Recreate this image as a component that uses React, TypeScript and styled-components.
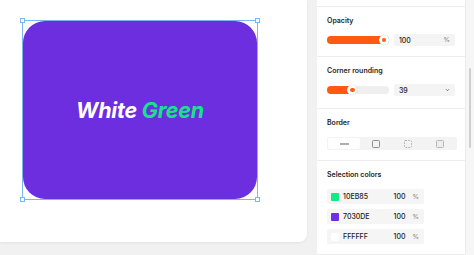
import React from 'react';
import styled, { createGlobalStyle } from 'styled-components';

const GlobalStyle = createGlobalStyle`
  html, body {
    margin: 0;
    padding: 0;
    background: #f1f1f1;
    font-family: Inter, "Liberation Sans", sans-serif;
  }
`;

const Page = styled.div`
  width: 474px;
  height: 255px;
  display: flex;
  align-items: flex-start;
  overflow: hidden;
  background: #f1f1f1;
`;

const CanvasArea = styled.div`
  width: 307px;
  height: 242px;
  flex-shrink: 0;
  background: #fff;
  border-bottom-right-radius: 8px;
  box-shadow: 0 1px 3px rgba(0, 0, 0, 0.06);
  padding: 20px 0 0 22px;
  box-sizing: border-box;
`;

const Selection = styled.div`
  position: relative;
  width: 236px;
  height: 180px;
  box-sizing: border-box;
  border: 1px solid #7cb5f2;
`;

const Frame = styled.div`
  width: 100%;
  height: 100%;
  background: #6c2edf;
  border-radius: 22px;
  display: flex;
  align-items: center;
  justify-content: center;
  font-size: 21.5px;
  font-weight: 700;
  font-style: italic;
  letter-spacing: -0.2px;
  color: #fff;
`;

const Green = styled.span`
  color: #18e38b;
`;

const Handle = styled.div<{ $x: 'left' | 'right'; $y: 'top' | 'bottom' }>`
  position: absolute;
  width: 5px;
  height: 5px;
  box-sizing: border-box;
  background: #fff;
  border: 1px solid #7cb5f2;
  ${p => p.$x}: -3px;
  ${p => p.$y}: -3px;
`;

const Panel = styled.div`
  width: 148px;
  height: 255px;
  margin-left: 10px;
  flex-shrink: 0;
  background: #fff;
  border-right: 1px solid #ececec;
`;

const Scrollbar = styled.div`
  flex: 1;
  height: 255px;
  background: #f6f6f6;
  padding-top: 68px;
  display: flex;
  justify-content: center;
`;

const Thumb = styled.div`
  width: 2px;
  height: 80px;
  border-radius: 1px;
  background: #cfcfcf;
`;

const TopStub = styled.div`
  height: 6px;
  border-bottom: 1px solid #ededed;
`;

const Section = styled.div<{ $gap?: number; $bottom?: number }>`
  padding: 10px 10px ${p => p.$bottom ?? 10}px;
  border-bottom: 1px solid #ededed;
  display: flex;
  flex-direction: column;
  gap: ${p => p.$gap ?? 9}px;
`;

const Label = styled.div`
  font-size: 7px;
  line-height: 8px;
  font-weight: 600;
  color: #1e1e1e;
`;

const ControlRow = styled.div`
  display: flex;
  align-items: center;
  gap: 5px;
  height: 12px;
`;

const Track = styled.div`
  position: relative;
  width: 63px;
  height: 8px;
  border-radius: 4px;
  background: #efefef;
`;

const Fill = styled.div`
  height: 100%;
  border-radius: 4px;
  background: #ff5a12;
`;

const Knob = styled.div`
  position: absolute;
  top: 50%;
  width: 10px;
  height: 10px;
  margin: -5px 0 0 -5px;
  border-radius: 50%;
  background: #fff;
  box-shadow: 0 0 1px rgba(0, 0, 0, 0.3);
  display: flex;
  align-items: center;
  justify-content: center;

  &::after {
    content: '';
    width: 4.5px;
    height: 4.5px;
    border-radius: 50%;
    background: #ff5a12;
  }
`;

const Input = styled.div`
  width: 62px;
  height: 12px;
  box-sizing: border-box;
  padding: 0 5px;
  border-radius: 2px;
  background: #f4f4f4;
  display: flex;
  align-items: center;
  justify-content: space-between;
  font-size: 7px;
  font-weight: 500;
  color: #222;
`;

const Unit = styled.span`
  color: #8a8a8a;
  font-size: 6.5px;
`;

const Segmented = styled.div`
  width: 130px;
  height: 13px;
  display: grid;
  grid-template-columns: repeat(4, 1fr);
  background: #f3f3f3;
  border-radius: 2px;
  padding: 1px;
  box-sizing: border-box;
`;

const Segment = styled.div<{ $active?: boolean }>`
  display: flex;
  align-items: center;
  justify-content: center;
  border-radius: 2px;
  background: ${p => (p.$active ? '#fff' : 'transparent')};
`;

const Colors = styled.div`
  display: flex;
  flex-direction: column;
  gap: 5px;
`;

const ColorRow = styled.div`
  width: 97px;
  height: 15px;
  box-sizing: border-box;
  padding: 0 5px 0 4px;
  background: #f5f5f5;
  border-radius: 2px;
  display: flex;
  align-items: center;
  font-size: 7px;
  font-weight: 500;
  color: #222;
`;

const Swatch = styled.div<{ $color: string }>`
  width: 8px;
  height: 8px;
  border-radius: 1px;
  background: ${p => p.$color};
  margin-right: 4px;
`;

const Hex = styled.span`
  flex: 1;
`;

const Pct = styled.span`
  margin-right: 7px;
`;

const Slider = ({ value }: { value: number }) => (
  <Track>
    <Fill style={{ width: `${value}%` }} />
    <Knob style={{ left: `${value}%` }} />
  </Track>
);

const Chevron = () => (
  <svg width="5" height="4" viewBox="0 0 5 4">
    <path d="M1 1.2 L2.5 2.7 L4 1.2" fill="none" stroke="#555" strokeWidth="0.8" />
  </svg>
);

const colors = [
  { hex: '10EB85', color: '#10eb85' },
  { hex: '7030DE', color: '#7030de' },
  { hex: 'FFFFFF', color: '#ffffff' },
];

export default function App() {
  return (
    <>
      <GlobalStyle />
      <Page>
        <CanvasArea>
          <Selection>
            <Frame>
              White&nbsp;<Green>Green</Green>
            </Frame>
            <Handle $x="left" $y="top" />
            <Handle $x="right" $y="top" />
            <Handle $x="left" $y="bottom" />
            <Handle $x="right" $y="bottom" />
          </Selection>
        </CanvasArea>
        <Panel>
          <TopStub />
          <Section>
            <Label>Opacity</Label>
            <ControlRow>
              <Slider value={92} />
              <Input>
                <span>100</span>
                <Unit>%</Unit>
              </Input>
            </ControlRow>
          </Section>
          <Section $bottom={12}>
            <Label>Corner rounding</Label>
            <ControlRow>
              <Slider value={41} />
              <Input>
                <span>39</span>
                <Chevron />
              </Input>
            </ControlRow>
          </Section>
          <Section $gap={10}>
            <Label>Border</Label>
            <Segmented>
              <Segment $active>
                <svg width="9" height="2" viewBox="0 0 9 2">
                  <line x1="0" y1="1" x2="9" y2="1" stroke="#333" strokeWidth="0.8" />
                </svg>
              </Segment>
              <Segment>
                <svg width="8" height="8" viewBox="0 0 8 8">
                  <rect x="0.5" y="0.5" width="7" height="7" rx="1" fill="none" stroke="#777" strokeWidth="0.8" />
                </svg>
              </Segment>
              <Segment>
                <svg width="8" height="8" viewBox="0 0 8 8">
                  <rect x="0.5" y="0.5" width="7" height="7" rx="1" fill="none" stroke="#999" strokeWidth="0.8" strokeDasharray="1.5 1.2" />
                </svg>
              </Segment>
              <Segment>
                <svg width="8" height="8" viewBox="0 0 8 8">
                  <rect x="0.5" y="0.5" width="7" height="7" rx="1" fill="none" stroke="#aaa" strokeWidth="0.8" />
                  <rect x="2" y="2" width="4" height="4" fill="none" stroke="#ddd" strokeWidth="0.6" />
                </svg>
              </Segment>
            </Segmented>
          </Section>
          <Section $gap={10}>
            <Label>Selection colors</Label>
            <Colors>
              {colors.map(c => (
                <ColorRow key={c.hex}>
                  <Swatch $color={c.color} />
                  <Hex>{c.hex}</Hex>
                  <Pct>100</Pct>
                  <Unit>%</Unit>
                </ColorRow>
              ))}
            </Colors>
          </Section>
        </Panel>
        <Scrollbar>
          <Thumb />
        </Scrollbar>
      </Page>
    </>
  );
}
